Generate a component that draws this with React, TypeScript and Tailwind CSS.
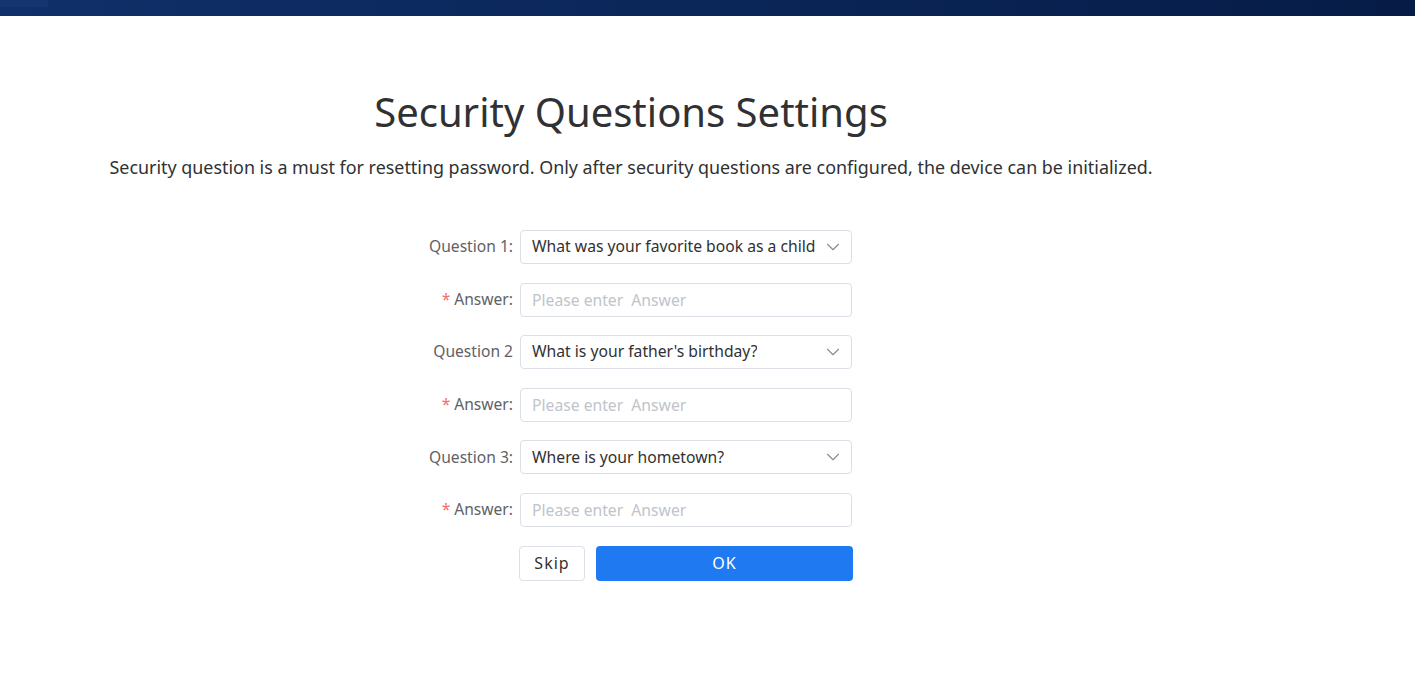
import { ChevronDown } from "lucide-react"

const SelectBox = ({ value }: { value: string }) => (
  <div className="w-[332px] h-[34px] flex items-center justify-between pl-[11px] pr-[7px] border border-[#dcdfe6] rounded-[4px] bg-white text-[15.7px] text-[#303133]">
    <span className="whitespace-nowrap overflow-hidden">{value}</span>
    <ChevronDown size={22} strokeWidth={1.2} className="text-[#868a92] shrink-0" />
  </div>
)

const AnswerBox = () => (
  <input
    type="text"
    placeholder="Please enter  Answer"
    className="w-[332px] h-[34px] pl-[11px] border border-[#dcdfe6] rounded-[4px] bg-white text-[15.7px] text-[#303133] placeholder:text-[#c0c4cc] outline-none"
  />
)

const Row = ({ label, required, children }: { label: string; required?: boolean; children: React.ReactNode }) => (
  <div className="flex items-center">
    <label className="w-[100px] pr-[7px] text-right text-[15.6px] text-[#606266] whitespace-nowrap">
      {required && <span className="text-[#f56c6c] mr-[4px]">*</span>}
      {label}
    </label>
    {children}
  </div>
)

export default function App() {
  return (
    <div className="min-h-screen bg-white" style={{ fontFamily: '"Noto Sans", "Open Sans", sans-serif' }}>
      <div className="h-[16px] bg-gradient-to-r from-[#10306a] to-[#061c47] flex">
        <div className="w-[48px] h-[7px] bg-[#14356f]" />
      </div>

      <div className="w-[1262px] text-center text-[#303133]">
        <h1 className="mt-[68px] text-[40px] leading-[56px]">Security Questions Settings</h1>
        <p className="mt-[14px] text-[17.9px] leading-[26px]">
          Security question is a must for resetting password. Only after security questions are configured, the device can be initialized.
        </p>
      </div>

      <div className="ml-[420px] mt-[50px] flex flex-col gap-[18.6px]">
        <Row label="Question 1:">
          <SelectBox value="What was your favorite book as a child" />
        </Row>
        <Row label="Answer:" required>
          <AnswerBox />
        </Row>
        <Row label="Question 2">
          <SelectBox value="What is your father's birthday?" />
        </Row>
        <Row label="Answer:" required>
          <AnswerBox />
        </Row>
        <Row label="Question 3:">
          <SelectBox value="Where is your hometown?" />
        </Row>
        <Row label="Answer:" required>
          <AnswerBox />
        </Row>
        <div className="flex items-center pl-[99px] gap-[11px]">
          <button className="w-[66px] h-[35px] border border-[#dcdfe6] rounded-[4px] bg-white text-[16px] tracking-[1px] text-[#303133]">
            Skip
          </button>
          <button className="w-[257px] h-[35px] rounded-[4px] bg-[#1f7af2] text-white text-[16px] tracking-[1px]">
            OK
          </button>
        </div>
      </div>
    </div>
  )
}
